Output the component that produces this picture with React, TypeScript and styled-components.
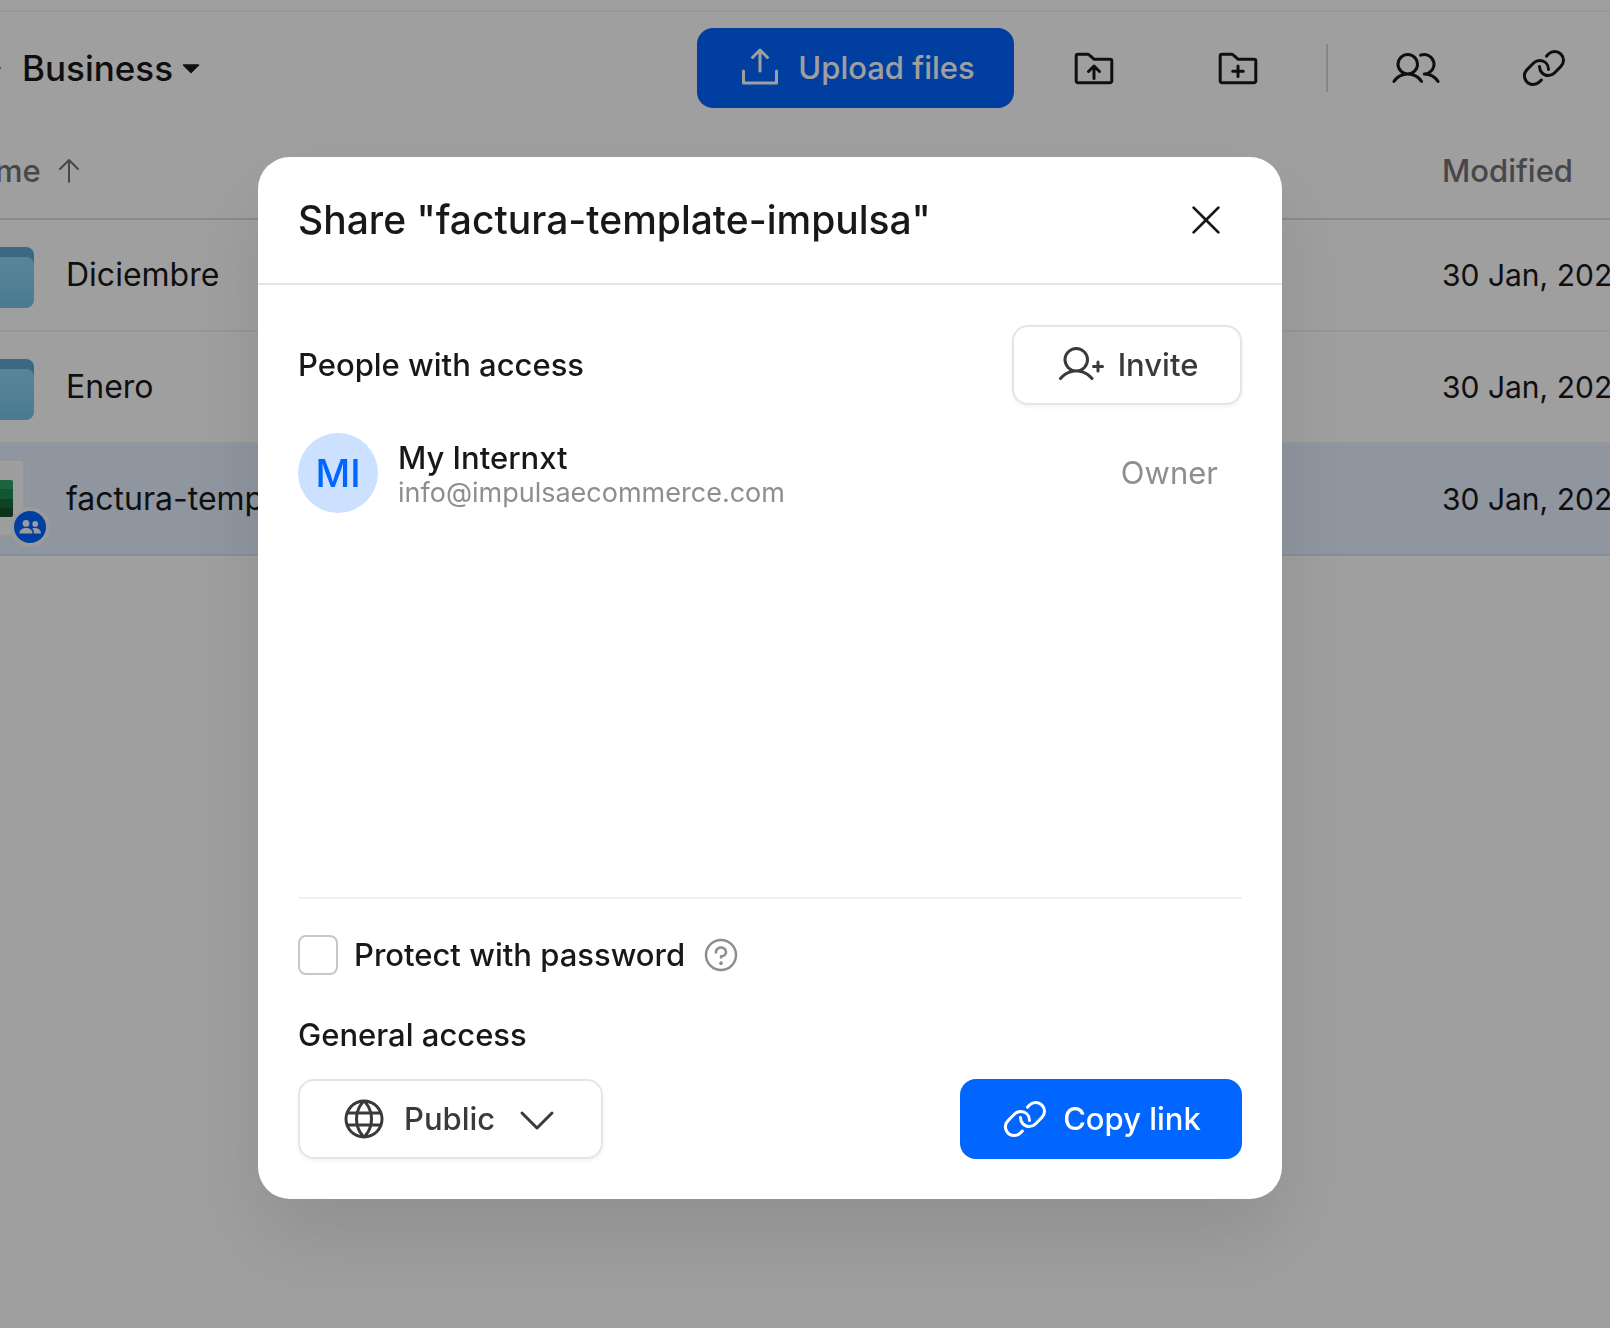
import React, { useState } from "react";
import styled, { createGlobalStyle } from "styled-components";
import {
  PiArrowUp,
  PiCaretDown,
  PiCaretDownFill,
  PiCaretRight,
  PiGlobe,
  PiLink,
  PiQuestion,
  PiUploadSimple,
  PiUserPlus,
  PiUsers,
  PiX,
} from "react-icons/pi";

const color = {
  ink: "#18181b",
  text: "#3a3a3b",
  muted: "#737375",
  faint: "#8e8e90",
  line: "#e5e5e7",
  hairline: "#f1f1f3",
  blue: "#0066ff",
};

const GlobalStyle = createGlobalStyle`
  *, *::before, *::after { box-sizing: border-box; }
  body {
    margin: 0;
    background: #fff;
    color: ${color.ink};
    font-family: Inter, "Liberation Sans", sans-serif;
    font-size: 31px;
    line-height: 40px;
  }
  button, input, select { font: inherit; color: inherit; }
`;

const Page = styled.div`
  min-height: 100vh;
  overflow: hidden;
`;

const TopEdge = styled.div`
  height: 12px;
  border-bottom: 2px solid #f3f3f5;
`;

const Toolbar = styled.header`
  display: flex;
  align-items: center;
  justify-content: space-between;
  height: 112px;
`;

const Breadcrumb = styled.nav`
  display: flex;
  align-items: center;
  gap: 12px;
  margin-left: -22px;
`;

const Crumb = styled.button`
  display: flex;
  align-items: center;
  gap: 6px;
  padding: 0;
  border: 0;
  background: none;
  font-size: 35px;
  font-weight: 500;
`;

const Actions = styled.div`
  display: flex;
  align-items: center;
  padding-right: 2px;
`;

const FolderActions = styled.div`
  display: flex;
  gap: 16px;
  margin: 0 24px 0 16px;
`;

const Separator = styled.div`
  width: 2px;
  height: 48px;
  margin-right: 24px;
  background: #d9d9dc;
`;

const IconButton = styled.button<{ $width: number }>`
  display: flex;
  align-items: center;
  justify-content: center;
  width: ${(p) => p.$width}px;
  height: 72px;
  padding: 0;
  border: 0;
  border-radius: 16px;
  background: none;
`;

const Button = styled.button<{ $primary?: boolean; $minWidth: number }>`
  display: flex;
  align-items: center;
  justify-content: center;
  gap: 14px;
  min-width: ${(p) => p.$minWidth}px;
  height: 80px;
  padding: 0 36px;
  border: ${(p) => (p.$primary ? "0" : `2px solid ${color.line}`)};
  border-radius: 16px;
  background: ${(p) => (p.$primary ? color.blue : "#fff")};
  color: ${(p) => (p.$primary ? "#fff" : color.text)};
  box-shadow: ${(p) => (p.$primary ? "none" : "0 2px 4px rgba(0, 0, 0, 0.05)")};
  font-weight: 500;
`;

const FileArea = styled.main`
  margin: 0 -160px 0 -46px;
`;

const FileTable = styled.table`
  width: 100%;
  border-collapse: separate;
  border-spacing: 0;
  table-layout: fixed;
`;

const HeadCell = styled.th<{ $width?: number }>`
  width: ${(p) => (p.$width ? `${p.$width}px` : "auto")};
  height: 96px;
  padding: 0;
  border-bottom: 2px solid #dcdcdf;
  color: ${color.muted};
  font-weight: 500;
  text-align: left;
`;

const HeadLabel = styled.span`
  display: flex;
  align-items: center;
  gap: 12px;
`;

const Row = styled.tr<{ $selected?: boolean }>`
  background: ${(p) => (p.$selected ? "#e5f0ff" : "transparent")};
`;

const Cell = styled.td<{ $selected?: boolean }>`
  height: 112px;
  padding: 0;
  border-bottom: 2px solid ${(p) => (p.$selected ? "#d3e3fa" : "#f1f1f3")};
  font-size: 32px;
  white-space: nowrap;
`;

const DateText = styled.time`
  font-size: 30px;
`;

const FileName = styled.div`
  display: flex;
  align-items: center;
  gap: 32px;
`;

const FileIcon = styled.div`
  position: relative;
  display: flex;
  justify-content: center;
  width: 80px;
`;

const SharedBadge = styled.span`
  position: absolute;
  right: -16px;
  bottom: -8px;
  display: flex;
  border: 4px solid #f6f8fb;
  border-radius: 50%;
`;

const Overlay = styled.div`
  position: fixed;
  inset: 0;
  display: flex;
  align-items: center;
  justify-content: center;
  padding: 28px 70px 0 0;
  background: rgba(0, 0, 0, 0.375);
`;

const Dialog = styled.section`
  display: flex;
  flex-direction: column;
  width: 1024px;
  max-width: 100%;
  border-radius: 32px;
  background: #fff;
  box-shadow: 0 40px 80px rgba(0, 0, 0, 0.1);
`;

const DialogHeader = styled.header`
  display: flex;
  align-items: center;
  justify-content: space-between;
  height: 128px;
  padding: 0 40px;
  border-bottom: 2px solid ${color.line};
`;

const DialogTitle = styled.h1`
  margin: 0;
  font-size: 39px;
  font-weight: 500;
  line-height: 48px;
`;

const DialogBody = styled.div`
  padding: 40px;
`;

const Between = styled.div`
  display: flex;
  align-items: center;
  justify-content: space-between;
`;

const Heading = styled.h2`
  margin: 0;
  font-size: 31px;
  font-weight: 500;
`;

const People = styled.ul`
  min-height: 494px;
  margin: 0;
  padding: 28px 0 0;
  border-bottom: 2px solid ${color.hairline};
  list-style: none;
`;

const Person = styled.li`
  display: flex;
  align-items: center;
  gap: 20px;
`;

const Avatar = styled.div`
  display: flex;
  align-items: center;
  justify-content: center;
  width: 80px;
  height: 80px;
  border-radius: 50%;
  background: #cce0ff;
  color: ${color.blue};
  font-size: 38px;
  font-weight: 500;
`;

const Identity = styled.div`
  flex: 1;
  padding-top: 6px;
`;

const PersonName = styled.div`
  font-weight: 500;
  line-height: 34px;
`;

const Email = styled.div`
  color: ${color.faint};
  font-size: 27px;
  line-height: 36px;
`;

const Role = styled.span`
  padding-right: 24px;
  color: ${color.faint};
`;

const Protect = styled.div`
  display: flex;
  align-items: center;
  gap: 16px;
  height: 40px;
  margin: 36px 0 40px;
  font-weight: 500;
`;

const ProtectLabel = styled.label`
  display: flex;
  align-items: center;
  gap: 16px;
`;

const Checkbox = styled.input`
  appearance: none;
  width: 40px;
  height: 40px;
  margin: 0;
  border: 2px solid #c7c7cb;
  border-radius: 8px;
  background: #fff;
  &:checked {
    border-color: ${color.blue};
    background: ${color.blue};
  }
`;

const HelpButton = styled.button`
  display: flex;
  padding: 0;
  border: 0;
  background: none;
  color: ${color.faint};
`;

const AccessLabel = styled.label`
  display: block;
  margin-bottom: 24px;
  font-weight: 500;
`;

const SelectBox = styled.div`
  display: flex;
  align-items: center;
  gap: 16px;
  width: 305px;
  height: 80px;
  padding: 0 40px;
  border: 2px solid ${color.line};
  border-radius: 16px;
  color: ${color.text};
  box-shadow: 0 2px 4px rgba(0, 0, 0, 0.05);
  svg { flex: none; }
`;

const Select = styled.select`
  flex: 1;
  min-width: 0;
  padding: 0;
  border: 0;
  background: none;
  appearance: none;
  font-weight: 500;
`;

function FolderActionIcon({ children }: { children: React.ReactNode }) {
  return (
    <svg width="48" height="48" viewBox="0 0 48 48" fill="none" stroke="currentColor" strokeWidth="3" strokeLinecap="round" strokeLinejoin="round" aria-hidden="true">
      <path d="M6.2 37V12a1.8 1.8 0 0 1 1.8-1.8h9.3a2.6 2.6 0 0 1 1.8.7L24 15.2h16a1.8 1.8 0 0 1 1.8 1.8v20a1.7 1.7 0 0 1-1.8 1.7H8A1.7 1.7 0 0 1 6.200 37z" />
      {children}
    </svg>
  );
}

function FolderGlyph() {
  return (
    <svg width="80" height="68" viewBox="0 -6 80 68" aria-hidden="true">
      <defs>
        <linearGradient id="front" x1="0" y1="0" x2="0" y2="1">
          <stop offset="0" stopColor="#90d6f2" />
          <stop offset="1" stopColor="#76c4ea" />
        </linearGradient>
      </defs>
      <path d="M0 8a8 8 0 0 1 8-8h64a8 8 0 0 1 8 8v30H0z" fill="#5ca8d4" />
      <path d="M0 18a8 8 0 0 1 8-8h64a8 8 0 0 1 8 8v35a8 8 0 0 1-8 8H8a8 8 0 0 1-8-8z" fill="url(#front)" />
    </svg>
  );
}

function SheetGlyph() {
  return (
    <svg width="62" height="80" viewBox="0 0 62 80" aria-hidden="true">
      <rect x="1" y="1" width="60" height="76" rx="3" fill="#fdfdfd" stroke="#e6e8ec" strokeWidth="1" />
      <path d="M10 21h38a2 2 0 0 1 2 2v8H10z" fill="#33a06b" />
      <path d="M10 30h40v10H10z" fill="#1f8a50" />
      <path d="M10 40h40v9H10z" fill="#176a3c" />
      <path d="M10 49h40v7a2 2 0 0 1-2 2H10z" fill="#17502f" />
    </svg>
  );
}

function BadgeGlyph() {
  return (
    <svg width="32" height="32" viewBox="0 0 32 32" aria-hidden="true">
      <circle cx="16" cy="16" r="16" fill={color.blue} />
      <g fill="#f4f8ff">
        <circle cx="12" cy="12.400" r="3.400" />
        <path d="M5.400 22.600c0-3.700 3-5.600 6.600-5.600s6.500 1.900 6.500 5.600z" />
        <circle cx="21.200" cy="13" r="2.900" />
        <path d="M18.200 17.500c4.500-1.500 8.800.6 8.800 5.100h-7c0-2.200-.5-3.800-1.800-5.100z" />
      </g>
    </svg>
  );
}

const files = [
  { name: "Diciembre", modified: "30 Jan, 2024", folder: true },
  { name: "Enero", modified: "30 Jan, 2024", folder: true },
  { name: "factura-template-impulsa", modified: "30 Jan, 2024", folder: false },
];

export default function App() {
  const [locked, setLocked] = useState(false);

  return (
    <>
      <GlobalStyle />
      <Page>
        <TopEdge />
        <Toolbar>
          <Breadcrumb aria-label="Folders">
            <PiCaretRight size={32} color={color.muted} />
            <Crumb>
              Business
              <PiCaretDownFill size={24} />
            </Crumb>
          </Breadcrumb>
          <Actions>
            <Button $primary $minWidth={317}>
              <PiUploadSimple size={48} />
              Upload files
            </Button>
            <FolderActions>
              <IconButton $width={128} aria-label="Upload folder">
                <FolderActionIcon>
                  <path d="M24 34.500V22.500M18.500 27.500l5.500-5.500 5.500 5.500" />
                </FolderActionIcon>
              </IconButton>
              <IconButton $width={128} aria-label="New folder">
                <FolderActionIcon>
                  <path d="M24 22v10.500M18.700 27.200h10.600" />
                </FolderActionIcon>
              </IconButton>
            </FolderActions>
            <Separator />
            <IconButton $width={128} aria-label="Share">
              <PiUsers size={48} />
            </IconButton>
            <IconButton $width={128} aria-label="Get link">
              <PiLink size={48} />
            </IconButton>
          </Actions>
        </Toolbar>

        <FileArea>
          <FileTable>
            <thead>
              <tr>
                <HeadCell>
                  <HeadLabel>
                    Name
                    <PiArrowUp size={32} />
                  </HeadLabel>
                </HeadCell>
                <HeadCell $width={328}>Modified</HeadCell>
              </tr>
            </thead>
            <tbody>
              {files.map((file) => (
                <Row key={file.name} $selected={!file.folder}>
                  <Cell $selected={!file.folder}>
                    <FileName>
                      <FileIcon>
                        {file.folder ? <FolderGlyph /> : <SheetGlyph />}
                        {!file.folder && (
                          <SharedBadge>
                            <BadgeGlyph />
                          </SharedBadge>
                        )}
                      </FileIcon>
                      {file.name}
                    </FileName>
                  </Cell>
                  <Cell $selected={!file.folder}>
                    <DateText dateTime="2024-01-30">{file.modified}</DateText>
                  </Cell>
                </Row>
              ))}
            </tbody>
          </FileTable>
        </FileArea>
      </Page>

      <Overlay>
        <Dialog role="dialog" aria-modal="true" aria-labelledby="share-title">
          <DialogHeader>
            <DialogTitle id="share-title">Share "factura-template-impulsa"</DialogTitle>
            <IconButton $width={72} aria-label="Close">
              <PiX size={44} />
            </IconButton>
          </DialogHeader>
          <DialogBody>
            <Between>
              <Heading>People with access</Heading>
              <Button $minWidth={230}>
                <PiUserPlus size={48} />
                Invite
              </Button>
            </Between>
            <People>
              <Person>
                <Avatar>MI</Avatar>
                <Identity>
                  <PersonName>My Internxt</PersonName>
                  <Email>info@impulsaecommerce.com</Email>
                </Identity>
                <Role>Owner</Role>
              </Person>
            </People>
            <Protect>
              <ProtectLabel>
                <Checkbox type="checkbox" checked={locked} onChange={(e) => setLocked(e.target.checked)} />
                Protect with password
              </ProtectLabel>
              <HelpButton aria-label="About password protection">
                <PiQuestion size={40} />
              </HelpButton>
            </Protect>
            <AccessLabel htmlFor="access">General access</AccessLabel>
            <Between>
              <SelectBox>
                <PiGlobe size={48} />
                <Select id="access" defaultValue="public">
                  <option value="public">Public</option>
                </Select>
                <PiCaretDown size={48} />
              </SelectBox>
              <Button $primary $minWidth={282}>
                <PiLink size={48} />
                Copy link
              </Button>
            </Between>
          </DialogBody>
        </Dialog>
      </Overlay>
    </>
  );
}
